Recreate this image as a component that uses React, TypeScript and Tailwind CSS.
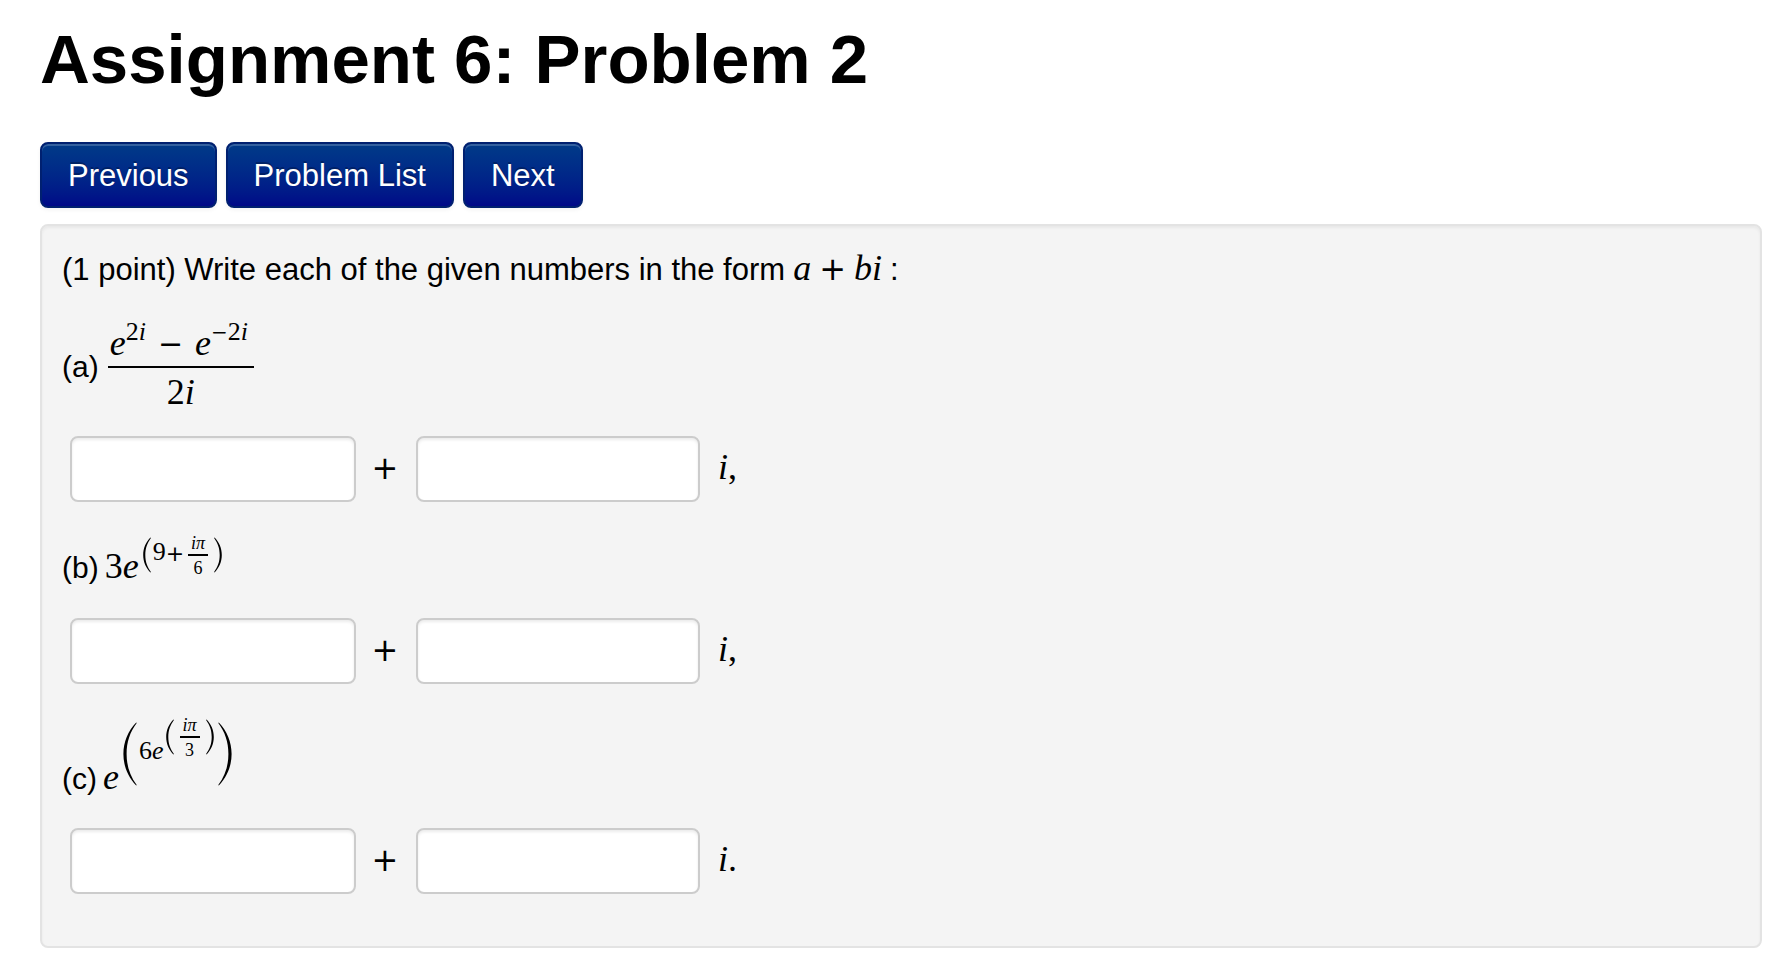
import React from "react";

type ParenProps = {
  side: "left" | "right";
  big?: boolean;
};

// stretched parenthesis around a tall exponent
function Paren({ side, big }: ParenProps) {
  const flip = side === "right";
  if (big) {
    return (
      <svg viewBox="0 0 14 64" className="w-[14px] h-16 shrink-0" aria-hidden="true">
        <path
          d={
            flip
              ? "M0.8 0.5 C9 9 13.6 20 13.6 32 C13.6 44 9 55 0.8 63.5 L0.3 63 C7 54 10.4 44 10.4 32 C10.4 20 7 10 0.3 1 Z"
              : "M13.2 0.5 C5 9 0.4 20 0.4 32 C0.4 44 5 55 13.2 63.5 L13.7 63 C7 54 3.6 44 3.6 32 C3.6 20 7 10 13.7 1 Z"
          }
        />
      </svg>
    );
  }
  return (
    <svg viewBox="0 0 8 36" className="w-2 h-9 shrink-0" aria-hidden="true">
      <path
        d={
          flip
            ? "M0.6 0.5 C5 5 7.8 11 7.8 18 C7.8 25 5 31 0.6 35.5 L0.1 35 C3.6 30 5.7 25 5.7 18 C5.7 11 3.6 6 0.1 1 Z"
            : "M7.4 0.5 C3 5 0.2 11 0.2 18 C0.2 25 3 31 7.4 35.5 L7.9 35 C4.4 30 2.3 25 2.3 18 C2.3 11 4.4 6 7.9 1 Z"
        }
      />
    </svg>
  );
}

// i*pi over a number, used in the exponents
function SmallFraction({ bottom }: { bottom: string }) {
  return (
    <span className="flex flex-col w-5 text-[18px] leading-none text-center">
      <span className="h-[23px] pt-[3px] italic">iπ</span>
      <span className="h-[2px] bg-black" />
      <span className="h-[23px] pt-[3px]">{bottom}</span>
    </span>
  );
}

function ExpressionA() {
  return (
    <div className="flex items-center gap-[9px]">
      <span className="text-[30px] leading-none">(a)</span>
      <span className="flex flex-col items-center font-['Liberation_Serif',serif] text-[36px] leading-none">
        <span className="flex items-end h-12 pb-[5px] pl-[2px] pr-[6px]">
          <i>e</i>
          <span className="pb-4 text-[26px] leading-none">
            2<i>i</i>
          </span>
          <span className="px-3 font-['DejaVu_Sans',sans-serif] text-[30px] leading-[34px]">−</span>
          <i>e</i>
          <span className="flex items-center pb-4 text-[26px] leading-none">
            <span className="font-['DejaVu_Sans',sans-serif] text-[20px]">−</span>
            <span>
              2<i>i</i>
            </span>
          </span>
        </span>
        <span className="self-stretch h-[2px] bg-black" />
        <span className="h-12 pt-[6px]">
          2<i>i</i>
        </span>
      </span>
    </div>
  );
}

function ExpressionB() {
  return (
    <div className="flex items-baseline gap-[6px] pb-[14px]">
      <span className="text-[30px] leading-none">(b)</span>
      <span className="flex items-end font-['Liberation_Serif',serif] text-[36px] leading-none">
        <span>
          3<i>e</i>
        </span>
        <span className="flex items-center pb-[5px] pl-1 text-[26px] leading-none">
          <Paren side="left" />
          <span className="pb-[6px] pl-[2px]">9</span>
          <span className="pb-[3px] font-['DejaVu_Sans',sans-serif] text-[22px]">+</span>
          <span className="pl-1 pr-[6px]">
            <SmallFraction bottom="6" />
          </span>
          <Paren side="right" />
        </span>
      </span>
    </div>
  );
}

function ExpressionC() {
  return (
    <div className="flex items-baseline gap-[6px] pb-[13px]">
      <span className="text-[30px] leading-none">(c)</span>
      <span className="flex items-end font-['Liberation_Serif',serif] text-[36px] leading-none">
        <i>e</i>
        <span className="flex items-end pb-[9px] pl-1 text-[26px] leading-none">
          <Paren side="left" big />
          <span className="flex items-end pb-[22px] px-[2px]">
            <span>
              6<i>e</i>
            </span>
            <span className="flex items-center gap-[6px] pb-[3px] px-[2px]">
              <Paren side="left" />
              <SmallFraction bottom="3" />
              <Paren side="right" />
            </span>
          </span>
          <Paren side="right" big />
        </span>
      </span>
    </div>
  );
}

function Answer({ part, end }: { part: string; end: string }) {
  const box =
    "h-[66px] px-3 bg-white border-2 border-[#cccccc] rounded-lg text-[30px] shadow-[inset_0_2px_3px_rgba(0,0,0,0.08)] outline-none focus:border-sky-400";
  return (
    <div className="flex items-center pl-2">
      <input type="text" aria-label={`Real part of ${part}`} className={`w-[286px] ${box}`} />
      <span className="w-[60px] pr-[2px] pb-[3px] text-center font-['DejaVu_Sans',sans-serif] text-[32px] leading-none">+</span>
      <input type="text" aria-label={`Imaginary part of ${part}`} className={`w-[284px] ${box}`} />
      <span className="pl-[18px] pb-1 font-['Liberation_Serif',serif] text-[36px] leading-none">
        <i>i</i>
        {end}
      </span>
    </div>
  );
}

function NavButton({ children }: { children: React.ReactNode }) {
  return (
    <button
      type="button"
      className="h-[66px] px-[26px] text-[31px] leading-none text-white border-2 border-[#002070] rounded-lg bg-linear-to-b from-[#003a88] to-[#000888] [text-shadow:0_-2px_0_rgba(0,0,0,0.25)] shadow-[inset_0_2px_0_rgba(255,255,255,0.2),0_2px_4px_rgba(0,0,0,0.05)] hover:to-[#003a88]"
    >
      {children}
    </button>
  );
}

export default function App() {
  return (
    <main className="pt-5 pl-10 pr-3 pb-4 bg-white text-black font-['Liberation_Sans',Arial,sans-serif]">
      <h1 className="mb-[42px] text-[69px] leading-[80px] font-bold">Assignment 6: Problem 2</h1>
      <nav className="flex gap-[9px] mb-4">
        <NavButton>Previous</NavButton>
        <NavButton>Problem List</NavButton>
        <NavButton>Next</NavButton>
      </nav>
      <section className="flex flex-col gap-[29px] px-5 pt-6 pb-[52px] bg-[#f4f4f4] border-2 border-[#e3e3e3] rounded-lg shadow-[inset_0_2px_3px_rgba(0,0,0,0.05)]">
        <p className="flex items-baseline gap-2 pb-[3px] text-[31px] leading-none">
          <span>(1 point) Write each of the given numbers in the form</span>
          <span className="flex items-baseline gap-2 font-['Liberation_Serif',serif] text-[36px]">
            <i>a</i>
            <span className="font-['DejaVu_Sans',sans-serif] text-[32px]">+</span>
            <i>bi</i>
          </span>
          <span>:</span>
        </p>
        <div className="flex flex-col gap-5">
          <ExpressionA />
          <Answer part="a" end="," />
        </div>
        <div className="flex flex-col gap-5">
          <ExpressionB />
          <Answer part="b" end="," />
        </div>
        <div className="flex flex-col gap-5">
          <ExpressionC />
          <Answer part="c" end="." />
        </div>
      </section>
    </main>
  );
}
